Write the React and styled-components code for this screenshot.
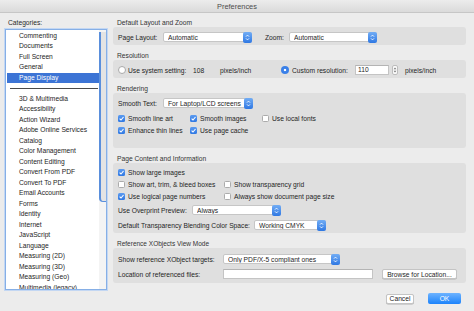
import React from 'react';
import styled, { createGlobalStyle } from 'styled-components';

const Global = createGlobalStyle`
  html, body { margin: 0; padding: 0; background: #ececec; }
  body {
    font-family: "Liberation Sans", Arial, sans-serif;
    font-size: 6.7px;
    color: #1e1e1e;
    -webkit-font-smoothing: antialiased;
  }
  #root { width: 474px; height: 311px; overflow: hidden; }
`;

const Window = styled.div`
  width: 474px;
  height: 311px;
  display: flex;
  flex-direction: column;
  background: #ececec;
`;

const TitleBar = styled.div`
  height: 12px;
  flex: none;
  display: flex;
  align-items: center;
  justify-content: center;
  background: linear-gradient(#ececec, #dadada);
  border-bottom: 1px solid #c6c6c6;
  color: #4c4c4c;
  font-size: 7.4px;
`;

const Body = styled.div`
  flex: 1;
  display: flex;
  padding-top: 5px;
  min-height: 0;
`;

const Sidebar = styled.div`
  width: 102px;
  margin-left: 5px;
  margin-right: 6px;
  flex: none;
  display: flex;
  flex-direction: column;
`;

const SideLabel = styled.div`
  height: 8px;
  line-height: 10px;
  padding-left: 3px;
  margin-bottom: 3px;
  color: #2a2a2a;
`;

const ListBox = styled.div`
  height: 261px;
  box-sizing: border-box;
  border: 1px solid #86afe6;
  box-shadow: 0 0 0 1px #c3d7f3;
  background: #fff;
  display: flex;
  overflow: hidden;
`;

const ListItems = styled.div`
  flex: 1;
  padding-left: 1px;
  padding-top: 0.5px;
`;

const Item = styled.div`
  height: 10.5px;
  line-height: 10.5px;
  padding-left: 12px;
  white-space: nowrap;
  background: ${p => (p.$sel ? '#3c74d5' : 'transparent')};
  color: ${p => (p.$sel ? '#fff' : '#1e1e1e')};
`;

const Separator = styled.div`
  height: 10.5px;
  display: flex;
  align-items: center;
  padding-left: 3px;
  padding-right: 1px;
  &::after {
    content: '';
    flex: 1;
    height: 1px;
    background: #4a4a4a;
  }
`;

const ScrollTrack = styled.div`
  width: 7px;
  flex: none;
  background: #f4f4f4;
  padding-top: 2px;
`;

const ScrollThumb = styled.div`
  height: 170px;
  box-sizing: border-box;
  border-left: 2px solid #5a8fdc;
  border-bottom: 1.5px solid #5a8fdc;
  border-bottom-left-radius: 4px;
  background: #e4e4e4;
`;

const Main = styled.div`
  flex: 1;
  display: flex;
  flex-direction: column;
  padding-right: 8px;
`;

const Section = styled.div`
  display: flex;
  flex-direction: column;
  margin-bottom: 6px;
`;

const SectionTitle = styled.div`
  height: 8px;
  line-height: 10px;
  padding-left: 4px;
  margin-bottom: 1px;
  color: #333;
  font-size: ${p => (p.$small ? '6.5px' : '6.7px')};
`;

const Group = styled.div`
  background: #dfdfdf;
  border-radius: 3px;
  padding: ${p => p.$pad || '5px 5px 3px'};
  display: flex;
  flex-direction: column;
`;

const Row = styled.div`
  display: flex;
  align-items: center;
  height: ${p => p.$h || 10}px;
  margin-top: ${p => p.$mt || 0}px;
  white-space: nowrap;
`;

const Label = styled.span`
  width: ${p => p.$w}px;
  margin-left: ${p => p.$ml || 0}px;
  flex: none;
  white-space: nowrap;
`;

const SelectBox = styled.div`
  width: ${p => p.$w}px;
  height: 10px;
  flex: none;
  box-sizing: border-box;
  display: flex;
  align-items: center;
  background: #fff;
  border: 1px solid #c6c6c6;
  border-radius: 2px;
  padding-left: 4px;
`;

const SelectText = styled.span`
  flex: 1;
  white-space: nowrap;
  overflow: hidden;
`;

const BlueStep = styled.span`
  width: 9px;
  height: 11px;
  margin-right: -1px;
  flex: none;
  border-radius: 2px;
  background: linear-gradient(#72adf5, #2f78e3);
  display: flex;
  align-items: center;
  justify-content: center;
`;

const TextInput = styled.div`
  width: ${p => p.$w}px;
  height: 10px;
  flex: none;
  box-sizing: border-box;
  background: #fff;
  border: 1px solid #c4c4c4;
  border-top-color: #b4b4b4;
  padding-left: 2px;
  line-height: 8px;
`;

const NumStep = styled.span`
  width: 6px;
  height: 10px;
  margin-left: 3px;
  flex: none;
  box-sizing: border-box;
  border: 1px solid #bdbdbd;
  border-radius: 2px;
  background: #fafafa;
  display: flex;
  align-items: center;
  justify-content: center;
`;

const RadioCircle = styled.span`
  width: 8px;
  height: 8px;
  box-sizing: border-box;
  border-radius: 50%;
  flex: none;
  margin-right: ${p => p.$mr || 2}px;
  border: ${p => (p.$on ? 'none' : '1px solid #a9a9a9')};
  background: ${p => (p.$on ? 'radial-gradient(circle, #fff 0 1.3px, #3a80e8 1.6px)' : '#fff')};
`;

const Box = styled.span`
  width: 7px;
  height: 7px;
  box-sizing: border-box;
  border-radius: 1.5px;
  flex: none;
  margin-right: 3px;
  display: flex;
  align-items: center;
  justify-content: center;
  border: ${p => (p.$on ? 'none' : '1px solid #ababab')};
  background: ${p => (p.$on ? 'linear-gradient(#5c9bf0, #2f78e3)' : '#fff')};
`;

const CheckGrid = styled.div`
  display: grid;
  grid-template-columns: ${p => p.$cols};
  row-gap: ${p => p.$rg}px;
  margin-top: ${p => p.$mt || 0}px;
`;

const CheckItem = styled.div`
  display: flex;
  align-items: center;
  height: 9px;
  white-space: nowrap;
`;

const Button = styled.div`
  width: ${p => p.$w}px;
  height: ${p => (p.$primary ? 11 : 10)}px;
  margin-left: ${p => p.$ml || 0}px;
  flex: none;
  box-sizing: border-box;
  display: flex;
  align-items: center;
  justify-content: center;
  border-radius: 2px;
  white-space: nowrap;
  background: ${p => (p.$primary ? 'linear-gradient(#6db3ff, #1c83fb)' : '#fff')};
  color: ${p => (p.$primary ? '#fff' : '#1e1e1e')};
  border: ${p => (p.$primary ? 'none' : '1px solid #c4c4c4')};
  box-shadow: ${p => (p.$primary ? 'none' : '0 0.5px 0 #b0b0b0')};
`;

const Footer = styled.div`
  display: flex;
  justify-content: flex-end;
  align-items: center;
  padding-right: 5px;
  margin-top: 4px;
`;

const Chevrons = () => (
  <svg width="7" height="9" viewBox="0 0 7 9">
    <path d="M2 3.6 L3.5 2.1 L5 3.6 M2 5.4 L3.5 6.9 L5 5.4" fill="none" stroke="#fff" strokeWidth="0.9" />
  </svg>
);

const Arrows = () => (
  <svg width="4" height="8" viewBox="0 0 4 8">
    <path d="M0.6 3.2 L2 1.4 L3.4 3.2 Z M0.6 4.8 L2 6.6 L3.4 4.8 Z" fill="#7a7a7a" />
  </svg>
);

const Tick = () => (
  <svg width="7" height="7" viewBox="0 0 7 7">
    <path d="M1.6 3.6 L3 5 L5.5 2" fill="none" stroke="#fff" strokeWidth="1.1" />
  </svg>
);

const Select = ({ w, children }) => (
  <SelectBox $w={w}>
    <SelectText>{children}</SelectText>
    <BlueStep><Chevrons /></BlueStep>
  </SelectBox>
);

const Check = ({ on, children }) => (
  <CheckItem>
    <Box $on={on}>{on && <Tick />}</Box>
    {children}
  </CheckItem>
);

const topItems = ['Commenting', 'Documents', 'Full Screen', 'General', 'Page Display'];
const moreItems = [
  '3D & Multimedia', 'Accessibility', 'Action Wizard', 'Adobe Online Services', 'Catalog',
  'Color Management', 'Content Editing', 'Convert From PDF', 'Convert To PDF', 'Email Accounts',
  'Forms', 'Identity', 'Internet', 'JavaScript', 'Language', 'Measuring (2D)', 'Measuring (3D)',
  'Measuring (Geo)', 'Multimedia (legacy)',
];

export default function App() {
  return (
    <>
      <Global />
      <Window>
        <TitleBar>Preferences</TitleBar>
        <Body>
          <Sidebar>
            <SideLabel>Categories:</SideLabel>
            <ListBox>
              <ListItems>
                {topItems.map(t => (
                  <Item key={t} $sel={t === 'Page Display'}>{t}</Item>
                ))}
                <Separator />
                {moreItems.map(t => (
                  <Item key={t}>{t}</Item>
                ))}
              </ListItems>
              <ScrollTrack>
                <ScrollThumb />
              </ScrollTrack>
            </ListBox>
          </Sidebar>

          <Main>
            <Section>
              <SectionTitle>Default Layout and Zoom</SectionTitle>
              <Group>
                <Row>
                  <Label $w={45}>Page Layout:</Label>
                  <Select w={89}>Automatic</Select>
                  <Label $w={24} $ml={13}>Zoom:</Label>
                  <Select w={88}>Automatic</Select>
                </Row>
              </Group>
            </Section>

            <Section>
              <SectionTitle>Resolution</SectionTitle>
              <Group>
                <Row>
                  <RadioCircle />
                  <Label $w={65}>Use system setting:</Label>
                  <Label $w={27}>108</Label>
                  <Label $w={61}>pixels/inch</Label>
                  <RadioCircle $on $mr={3} />
                  <Label $w={63}>Custom resolution:</Label>
                  <TextInput $w={34}>110</TextInput>
                  <NumStep><Arrows /></NumStep>
                  <Label $w={50} $ml={7}>pixels/inch</Label>
                </Row>
              </Group>
            </Section>

            <Section>
              <SectionTitle>Rendering</SectionTitle>
              <Group $pad="5px 5px 13px">
                <Row>
                  <Label $w={45}>Smooth Text:</Label>
                  <Select w={90}>For Laptop/LCD screens</Select>
                </Row>
                <CheckGrid $cols="72px 72px auto" $rg={3} $mt={6}>
                  <Check on>Smooth line art</Check>
                  <Check on>Smooth images</Check>
                  <Check>Use local fonts</Check>
                  <Check on>Enhance thin lines</Check>
                  <Check on>Use page cache</Check>
                </CheckGrid>
              </Group>
            </Section>

            <Section>
              <SectionTitle>Page Content and Information</SectionTitle>
              <Group $pad="5px 5px 3px">
                <CheckGrid $cols="106px auto" $rg={3}>
                  <Check on>Show large images</Check>
                  <span />
                  <Check>Show art, trim, &amp; bleed boxes</Check>
                  <Check>Show transparency grid</Check>
                  <Check on>Use logical page numbers</Check>
                  <Check>Always show document page size</Check>
                </CheckGrid>
                <Row $mt={4}>
                  <Label $w={74}>Use Overprint Preview:</Label>
                  <Select w={89}>Always</Select>
                </Row>
                <Row $mt={5}>
                  <Label $w={136}>Default Transparency Blending Color Space:</Label>
                  <Select w={72}>Working CMYK</Select>
                </Row>
              </Group>
            </Section>

            <Section>
              <SectionTitle $small>Reference XObjects View Mode</SectionTitle>
              <Group $pad="6px 5px 4px">
                <Row>
                  <Label $w={105}>Show reference XObject targets:</Label>
                  <Select w={117}>Only PDF/X-5 compliant ones</Select>
                </Row>
                <Row $mt={5}>
                  <Label $w={105}>Location of referenced files:</Label>
                  <TextInput $w={150} />
                  <Button $w={75} $ml={9}>Browse for Location...</Button>
                </Row>
              </Group>
            </Section>

            <Footer>
              <Button $w={28}>Cancel</Button>
              <Button $w={33} $ml={14} $primary>OK</Button>
            </Footer>
          </Main>
        </Body>
      </Window>
    </>
  );
}
